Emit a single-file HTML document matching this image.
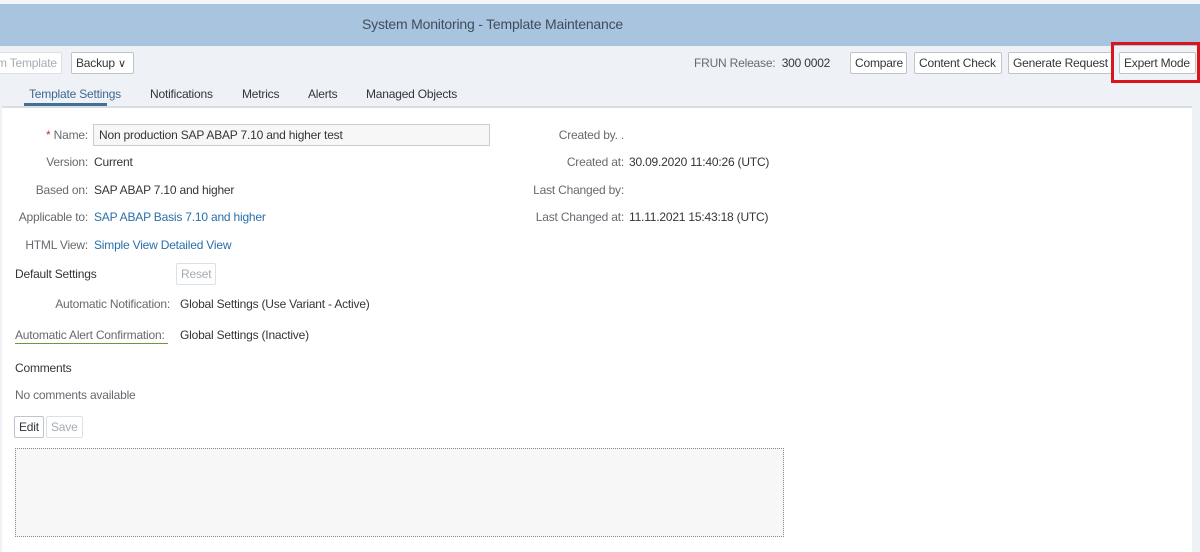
<!DOCTYPE html>
<html><head><meta charset="utf-8"><style>
*{margin:0;padding:0;box-sizing:border-box}
body{width:1200px;height:552px;overflow:hidden;background:#eef2f7;font-family:"Liberation Sans",sans-serif;font-size:12px;letter-spacing:-0.2px;color:#32363a;position:relative}
.a{position:absolute;white-space:nowrap}
.btn{position:absolute;height:22px;border:1px solid #bfc4c9;border-radius:2px;background:#fff;line-height:20px;padding:0 4px;font-size:12px;color:#32363a}
.lbl{color:#666a6f;text-align:right}
.lnk{color:#2a6fa8}
</style></head><body>
<div class="a" style="left:0;top:0;width:1200px;height:4px;background:#f5f6f7"></div>
<div class="a" style="left:0;top:4px;width:1200px;height:42px;background:#a8c4de"></div>
<div class="a" style="left:0;top:16px;width:985px;text-align:center;font-size:14px;color:#3f4e5c">System Monitoring - Template Maintenance</div>
<div class="btn" style="left:-8px;top:52px;color:#a6acb3;border-color:#dde1e5">m Template</div>
<div class="btn" style="left:71px;top:52px;width:63px">Backup <span style="font-size:11px">&#8744;</span></div>
<div class="a" style="left:694px;top:56px;color:#666a6f">FRUN Release:&nbsp; <span style="color:#32363a">300 0002</span></div>
<div class="btn" style="left:850px;top:52px;width:57px">Compare</div>
<div class="btn" style="left:914px;top:52px;width:88px">Content Check</div>
<div class="btn" style="left:1008px;top:52px;width:105px">Generate Request</div>
<div class="btn" style="left:1119px;top:52px;width:77px">Expert Mode</div>
<div class="a" style="left:1111px;top:42px;width:89px;height:41px;border:3px solid #d9141c"></div>
<div class="a" style="left:29px;top:87px;color:#3e678e">Template Settings</div>
<div class="a" style="left:24px;top:103px;width:83px;height:3px;background:#426f93"></div>
<div class="a" style="left:150px;top:87px">Notifications</div>
<div class="a" style="left:242px;top:87px">Metrics</div>
<div class="a" style="left:308px;top:87px">Alerts</div>
<div class="a" style="left:366px;top:87px">Managed Objects</div>
<div class="a" style="left:2px;top:106px;width:1190px;height:2px;background:#d9dee4"></div>
<div class="a" style="left:2px;top:108px;width:1190px;height:444px;background:#fff"></div>
<div class="a lbl" style="left:0;top:128px;width:88px"><span style="color:#c8302a">*</span> Name:</div>
<div class="a" style="left:93px;top:124px;width:397px;height:22px;border:1px solid #c9cdd1;background:#f7f7f7;padding:3px 5px">Non production SAP ABAP 7.10 and higher test</div>
<div class="a lbl" style="left:0;top:155px;width:88px">Version:</div><div class="a" style="left:94px;top:155px">Current</div>
<div class="a lbl" style="left:0;top:183px;width:88px">Based on:</div><div class="a" style="left:94px;top:183px">SAP ABAP 7.10 and higher</div>
<div class="a lbl" style="left:0;top:210px;width:88px">Applicable to:</div><div class="a lnk" style="left:94px;top:210px">SAP ABAP Basis 7.10 and higher</div>
<div class="a lbl" style="left:0;top:238px;width:88px">HTML View:</div><div class="a lnk" style="left:94px;top:238px">Simple View Detailed View</div>
<div class="a" style="left:15px;top:267px">Default Settings</div>
<div class="btn" style="left:176px;top:263px;color:#a6acb3;border-color:#dde1e5">Reset</div>
<div class="a lbl" style="left:0;top:297px;width:170px">Automatic Notification:</div><div class="a" style="left:180px;top:297px">Global Settings (Use Variant - Active)</div>
<div class="a lbl" style="left:15px;top:328px;color:#666a6f">Automatic Alert Confirmation:</div>
<div class="a" style="left:15px;top:343px;width:153px;height:1px;background:#6b9a3c"></div>
<div class="a" style="left:180px;top:328px">Global Settings (Inactive)</div>
<div class="a lbl" style="left:500px;top:128px;width:124px">Created by. .</div>
<div class="a lbl" style="left:500px;top:155px;width:124px">Created at:</div><div class="a" style="left:629px;top:155px">30.09.2020 11:40:26 (UTC)</div>
<div class="a lbl" style="left:500px;top:183px;width:124px">Last Changed by:</div>
<div class="a lbl" style="left:500px;top:210px;width:124px">Last Changed at:</div><div class="a" style="left:629px;top:210px">11.11.2021 15:43:18 (UTC)</div>
<div class="a" style="left:15px;top:361px">Comments</div>
<div class="a" style="left:15px;top:388px;color:#666a6f">No comments available</div>
<div class="btn" style="left:14px;top:416px;height:22px">Edit</div>
<div class="btn" style="left:46px;top:416px;color:#a6acb3;border-color:#dde1e5">Save</div>
<div class="a" style="left:15px;top:448px;width:769px;height:89px;border:1px dotted #888;background:#f7f7f7"></div>
</body></html>
